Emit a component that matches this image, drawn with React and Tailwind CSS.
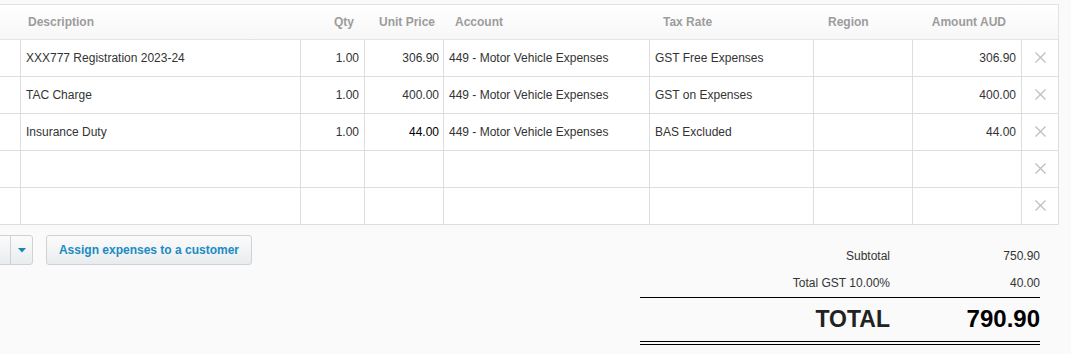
const rows = [
  { desc: "XXX777 Registration 2023-24", qty: "1.00", price: "306.90", account: "449 - Motor Vehicle Expenses", tax: "GST Free Expenses", amount: "306.90" },
  { desc: "TAC Charge", qty: "1.00", price: "400.00", account: "449 - Motor Vehicle Expenses", tax: "GST on Expenses", amount: "400.00" },
  { desc: "Insurance Duty", qty: "1.00", price: "44.00", account: "449 - Motor Vehicle Expenses", tax: "BAS Excluded", amount: "44.00", focus: true },
  { desc: "", qty: "", price: "", account: "", tax: "", amount: "" },
  { desc: "", qty: "", price: "", account: "", tax: "", amount: "" },
];

const cols = "grid grid-cols-[21px_280px_64px_79px_206px_164px_99px_109px_37px]";

function XIcon() {
  return (
    <svg width="11" height="11" viewBox="0 0 11 11" className="text-[#bdbdbd]">
      <path d="M0.5 0.5 L10.5 10.5 M10.5 0.5 L0.5 10.5" stroke="currentColor" strokeWidth="1.2" fill="none" />
    </svg>
  );
}

export default function App() {
  const cell = "border-r border-[#dedede] flex items-center h-[36px] pb-[1px]";
  return (
    <div className="w-[1071px] h-[354px] bg-[#fafafa] overflow-hidden font-['Liberation_Sans',Arial,sans-serif] text-[12px] text-[#333]">
      <div className="pt-[4px]">
        <div className="w-[1059px] bg-white">
          <div className={`${cols} h-[36px] border-t border-b border-[#e3e3e3] border-r border-r-[#e3e3e3] bg-gradient-to-b from-white to-[#f7f7f7] font-bold text-[#9c9c9c] items-center`}>
            <div />
            <div className="pl-[7px]">Description</div>
            <div className="text-right pr-[11px]">Qty</div>
            <div className="text-right pr-[9px]">Unit Price</div>
            <div className="pl-[11px]">Account</div>
            <div className="pl-[13px]">Tax Rate</div>
            <div className="pl-[14px]">Region</div>
            <div className="text-right pr-[16px]">Amount AUD</div>
            <div />
          </div>
          {rows.map((r, i) => (
            <div key={i} className={`${cols} border-b border-[#dedede]`}>
              <div className={cell} />
              <div className={`${cell} pl-[5px]`}>{r.desc}</div>
              <div className={`${cell} justify-end pr-[5px]`}>{r.qty}</div>
              <div className={`${cell} justify-end pr-[4px] ${r.focus ? "text-black" : ""}`}>{r.price}</div>
              <div className={`${cell} pl-[5px]`}>{r.account}</div>
              <div className={`${cell} pl-[5px]`}>{r.tax}</div>
              <div className={cell} />
              <div className={`${cell} justify-end pr-[5px]`}>{r.amount}</div>
              <div className={`${cell} justify-center pl-[1px]`}>
                <XIcon />
              </div>
            </div>
          ))}
        </div>
      </div>

      <div className="flex mt-[10px]">
        <div className="flex items-start gap-[13px]">
          <div className="flex h-[30px] ml-[-6px] border border-[#cfd2d4] rounded-[3px] bg-gradient-to-b from-[#fbfbfb] to-[#e9ecee]">
            <div className="w-[16px] border-r border-[#cfd2d4]" />
            <div className="w-[21px] flex items-center justify-center">
              <svg width="8" height="5" viewBox="0 0 8 5">
                <path d="M0 0 L8 0 L4 4.5 Z" fill="#1a84b8" />
              </svg>
            </div>
          </div>
          <button className="h-[30px] w-[206px] border border-[#cfd2d4] rounded-[3px] bg-gradient-to-b from-[#fbfbfb] to-[#e9ecee] text-[#1a8bc4] font-bold text-[12px] pb-[1px]">
            Assign expenses to a customer
          </button>
        </div>

        <div className="ml-auto mr-[31px] w-[400px] pt-[8px]">
          <div className="grid grid-cols-[250px_150px] leading-[27px]">
            <div className="text-right">Subtotal</div>
            <div className="text-right">750.90</div>
            <div className="text-right">Total GST 10.00%</div>
            <div className="text-right">40.00</div>
          </div>
          <div className="border-t border-black" />
          <div className="grid grid-cols-[250px_150px] h-[43px] items-center font-bold pb-[1px]">
            <div className="text-right text-[23px] text-[#222]">TOTAL</div>
            <div className="text-right text-[24px] text-black">790.90</div>
          </div>
          <div className="h-[4px] border-t border-b border-black" />
        </div>
      </div>
    </div>
  );
}
